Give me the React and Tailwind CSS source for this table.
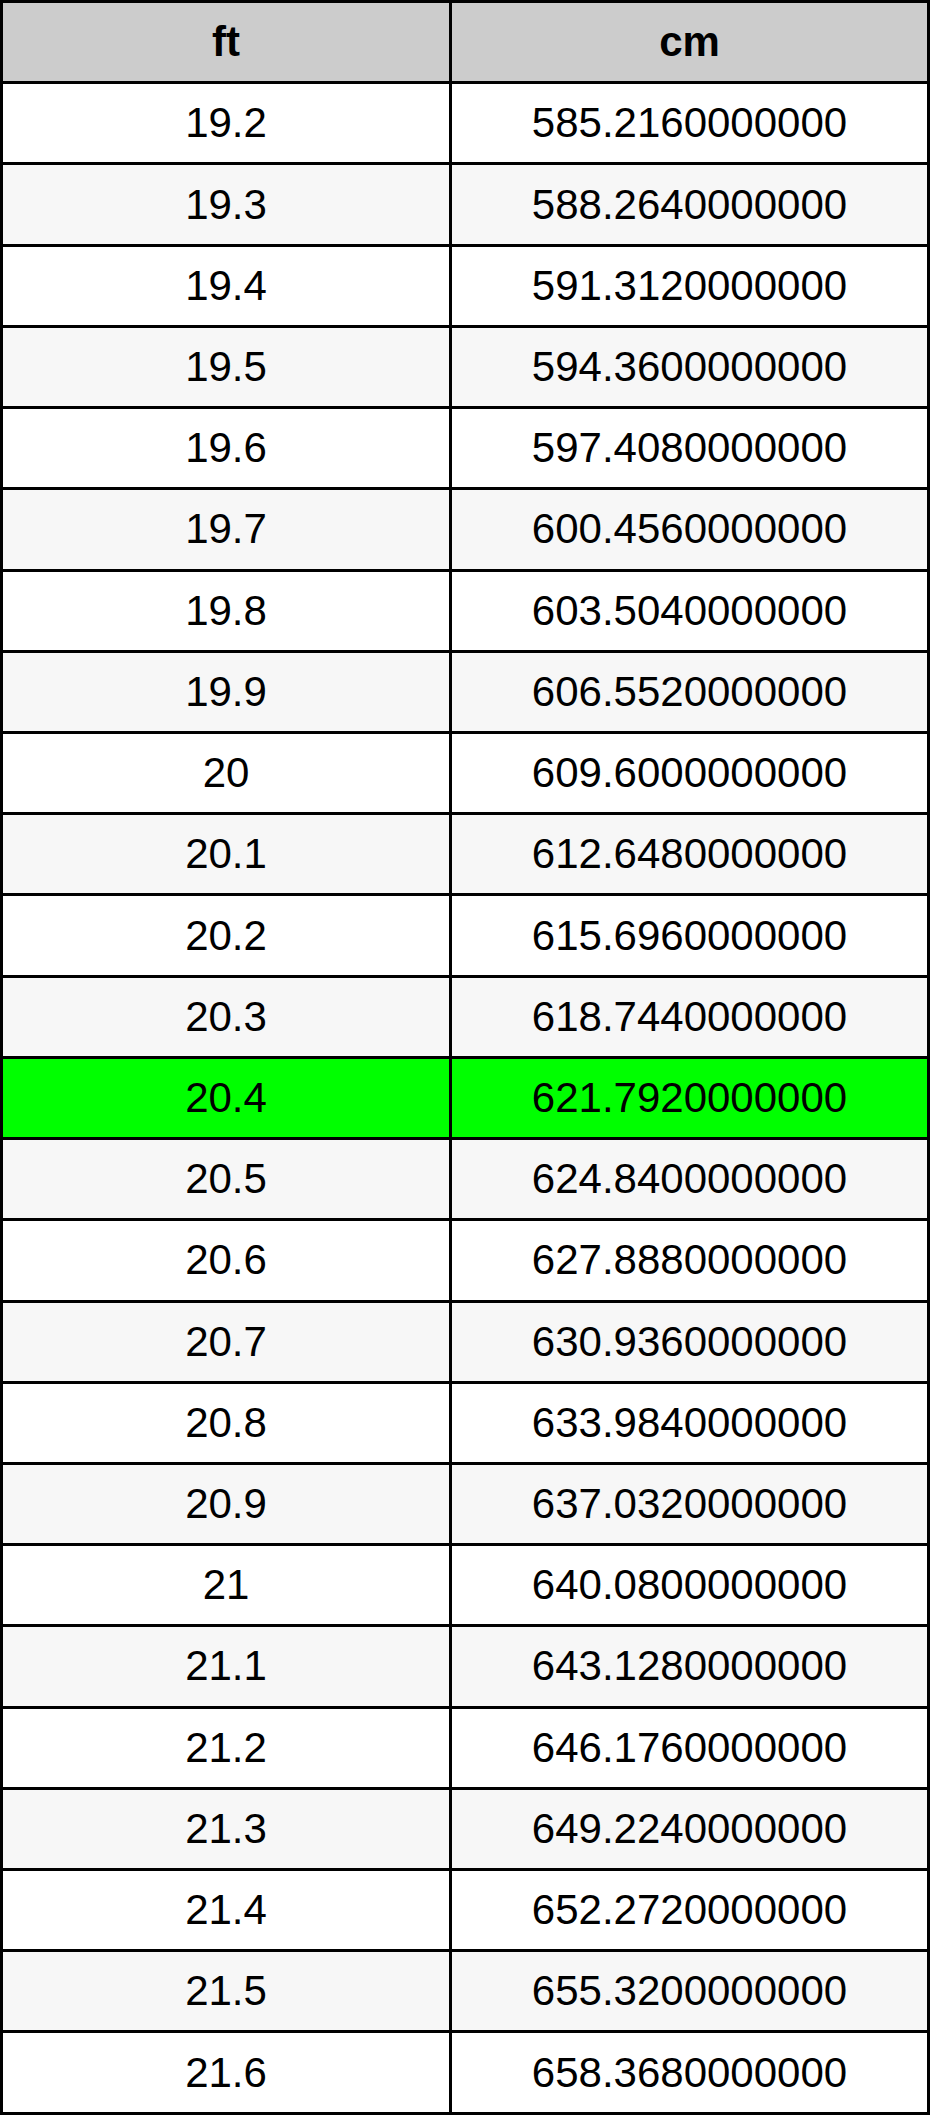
const rows = [
  ["19.2", "585.2160000000"],
  ["19.3", "588.2640000000"],
  ["19.4", "591.3120000000"],
  ["19.5", "594.3600000000"],
  ["19.6", "597.4080000000"],
  ["19.7", "600.4560000000"],
  ["19.8", "603.5040000000"],
  ["19.9", "606.5520000000"],
  ["20", "609.6000000000"],
  ["20.1", "612.6480000000"],
  ["20.2", "615.6960000000"],
  ["20.3", "618.7440000000"],
  ["20.4", "621.7920000000"],
  ["20.5", "624.8400000000"],
  ["20.6", "627.8880000000"],
  ["20.7", "630.9360000000"],
  ["20.8", "633.9840000000"],
  ["20.9", "637.0320000000"],
  ["21", "640.0800000000"],
  ["21.1", "643.1280000000"],
  ["21.2", "646.1760000000"],
  ["21.3", "649.2240000000"],
  ["21.4", "652.2720000000"],
  ["21.5", "655.3200000000"],
  ["21.6", "658.3680000000"],
]

// height includes the bottom border (border-box)
const cell = "h-[81.23px] flex items-center justify-center border-r-[3px] border-b-[3px] border-black"

function App() {
  return (
    <div className="w-[930px] bg-white text-black text-[42px] leading-none font-['Liberation_Sans',Arial,sans-serif]">
      <div className="grid grid-cols-[449px_478px] border-t-[3px] border-l-[3px] border-black">
        <div className={`${cell} bg-[#cccccc] font-bold`}>ft</div>
        <div className={`${cell} bg-[#cccccc] font-bold`}>cm</div>
        {rows.map(([ft, cm], i) => {
          const bg = ft === "20.4" ? "bg-[#00ff00]" : i % 2 === 0 ? "bg-white" : "bg-[#f7f7f7]"
          return [
            <div key={ft + "a"} className={`${cell} ${bg}`}>{ft}</div>,
            <div key={ft + "b"} className={`${cell} ${bg}`}>{cm}</div>,
          ]
        })}
      </div>
    </div>
  )
}

export default App
